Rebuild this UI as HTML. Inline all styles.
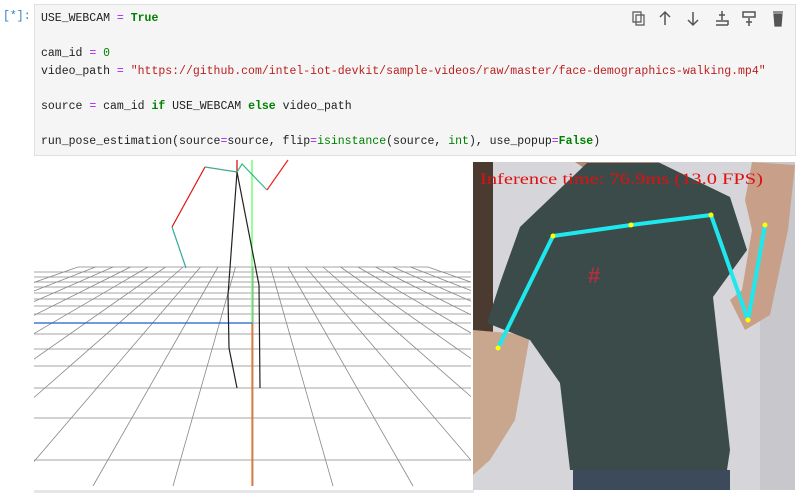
<!DOCTYPE html>
<html><head><style>
body{margin:0;width:800px;height:494px;background:#fff;overflow:hidden;position:relative;font-family:"Liberation Mono",monospace}
.p{position:absolute;left:3px;top:10px;color:#307fc1;font-size:11.5px}
.cell{position:absolute;left:34px;top:4px;width:760px;height:150px;background:#f5f5f5;border:1px solid #e0e0e0}
pre{margin:0;position:absolute;left:6px;top:5px;font-family:"Liberation Mono",monospace;font-size:11.5px;line-height:17.6px;color:#212121}
.k{color:#008000;font-weight:bold}.o{color:#aa22ff}.n{color:#008000}.s{color:#ba2121}.b{color:#008000}
</style></head><body>
<div class="p">[*]:</div>
<div class="cell"><pre>USE_WEBCAM <span class="o">=</span> <span class="k">True</span>

cam_id <span class="o">=</span> <span class="n">0</span>
video_path <span class="o">=</span> <span class="s">"https://github.com/intel-iot-devkit/sample-videos/raw/master/face-demographics-walking.mp4"</span>

source <span class="o">=</span> cam_id <span class="k">if</span> USE_WEBCAM <span class="k">else</span> video_path

run_pose_estimation(source<span class="o">=</span>source, flip<span class="o">=</span><span class="b">isinstance</span>(source, <span class="b">int</span>), use_popup<span class="o">=</span><span class="k">False</span>)</pre></div>
<svg width="800" height="494" style="position:absolute;left:0;top:0" xmlns="http://www.w3.org/2000/svg">
<g stroke="#555" stroke-width="1.5" fill="none">
<path d="M633 12h8v10h-8z M636 15h8v10h-8z" stroke-width="1.2"/>
<path d="M665 25V12M660 17l5-5 5 5"/>
<path d="M693 12v13M688 20l5 5 5-5"/>
<path d="M716 25h12M722 11v9M719 15h6M716 21h12v4" />
<path d="M743 12h12v5h-12zM749 18v8M746 22h6"/>
</g>
<path d="M774 14h8l-1 12h-6z M773 12h10" fill="#555" stroke="#555" stroke-width="1.2"/>
<defs><clipPath id="c"><rect x="34" y="160" width="437" height="327"/></clipPath></defs>
<g clip-path="url(#c)" stroke="#888" stroke-width="0.8" fill="none" id="grid"></g>
<g fill="none" stroke-width="1.2">
<path d="M237 160v12" stroke="#d00"/>
<path d="M252 160V323" stroke="#5f5"/>
<path d="M252 323V486" stroke="#f60"/>
<path d="M34 323H252" stroke="#1a5fd0"/>
<path d="M237 172L205 167" stroke="#4a8"/>
<path d="M205 167L172 227" stroke="#d11"/>
<path d="M172 227L186 268" stroke="#3a9"/>
<path d="M237 172L242 164L267 190" stroke="#3b8"/>
<path d="M267 190L288 160" stroke="#e22"/>
<path d="M237 172L228 295L229 348L237 388M237 172L259 285L260 388" stroke="#222"/>
</g>
<rect x="473" y="162" width="322" height="328" fill="#d6d6da"/>
<rect x="760" y="162" width="35" height="328" fill="#c8c8cc"/>
<rect x="473" y="162" width="20" height="178" fill="#4a3a30"/>
<polygon points="473,330 530,335 515,420 490,460 473,475" fill="#c9a68e"/>
<polygon points="730,300 745,330 770,315 788,230 795,165 752,162 745,200 752,230 742,290" fill="#c8a089"/>
<polygon points="575,162 660,162 650,172 590,172" fill="#b08a75"/>
<polygon points="520,227 587,163 660,163 730,197 747,250 713,297 730,450 727,470 570,470 560,383 530,340 487,323 500,283" fill="#3a4b4a"/>
<rect x="573" y="470" width="157" height="20" fill="#3d4a5c"/>
<text x="588" y="283" fill="#b03040" font-size="22" font-weight="bold" font-family="Liberation Sans,sans-serif">#</text>
<path d="M498 348L553 236L631 225L711 215L748 320L765 225" stroke="#1ee8ee" stroke-width="4" fill="none" stroke-linejoin="round"/>
<g fill="#ff0"><circle cx="498" cy="348" r="2.5"/><circle cx="553" cy="236" r="2.5"/><circle cx="631" cy="225" r="2.5"/><circle cx="711" cy="215" r="2.5"/><circle cx="748" cy="320" r="2.5"/><circle cx="765" cy="225" r="2.5"/></g>
<text x="480" y="184" fill="#e01010" font-size="16" font-family="Liberation Serif,serif" textLength="283" lengthAdjust="spacingAndGlyphs">Inference time: 76.9ms (13.0 FPS)</text>
<rect x="34" y="490" width="440" height="3" fill="#e6e6e6"/>
</svg>
<script>
var g=document.getElementById('grid'),s='';
var ys=[267,272,277,282,287,293,299,306,314,323,334,349,366,388,418,460];
ys.forEach(function(y,i){var x1=i==0?78:34,x2=i==0?428:471;s+='<line x1="'+x1+'" y1="'+y+'" x2="'+x2+'" y2="'+y+'"/>';});
for(var i=0;i<=20;i++){var xt=78+17.5*i,xb=253+(i-10)*80;s+='<line x1="'+xt+'" y1="267" x2="'+xb+'" y2="486"/>';}
g.innerHTML=s;
</script>
</body></html>
